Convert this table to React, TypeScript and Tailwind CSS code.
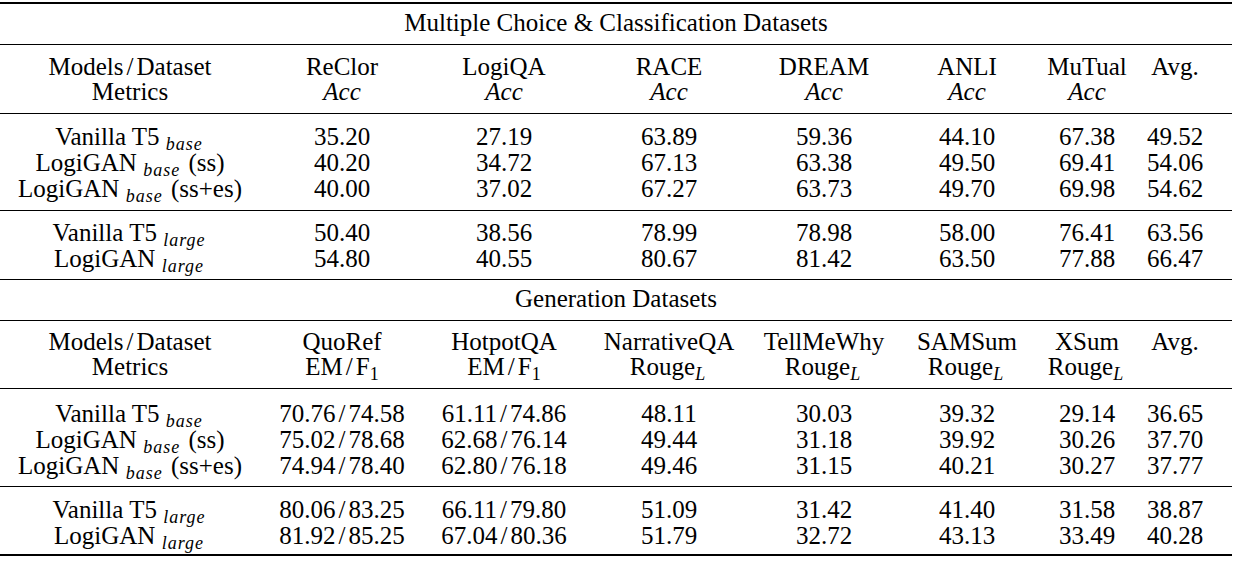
import type { ReactNode } from "react";

// column widths picked so each column centre matches the table
const grid =
  "grid grid-cols-[260px_164px_160px_170px_140px_146px_94px_82px] text-center";

function Sub({ children, italic = true }: { children: ReactNode; italic?: boolean }) {
  return (
    <span
      className={`relative top-[5px] text-[18px] leading-none ${
        italic ? "italic tracking-[1px] pr-[2px]" : ""
      }`}
    >
      {children}
    </span>
  );
}

function Slash() {
  return <span className="mx-[3px]">/</span>;
}

function Row({ cells, className = "" }: { cells: ReactNode[]; className?: string }) {
  return (
    <div className={`${grid} ${className}`}>
      {cells.map((c, i) => (
        <div key={i} className="whitespace-nowrap">
          {c}
        </div>
      ))}
    </div>
  );
}

const acc = <span className="italic">Acc</span>;
const rouge = (
  <>
    Rouge<Sub>L</Sub>
  </>
);
const emf = (
  <>
    EM
    <Slash />F<Sub italic={false}>1</Sub>
  </>
);

const modelsHeader = (
  <>
    Models
    <Slash />
    Dataset
  </>
);

const vanillaBase = (
  <>
    Vanilla T5 <Sub>base</Sub>
  </>
);
const logiSs = (
  <>
    LogiGAN <Sub>base</Sub> (ss)
  </>
);
const logiSsEs = (
  <>
    LogiGAN <Sub>base</Sub> (ss+es)
  </>
);
const vanillaLarge = (
  <>
    Vanilla T5 <Sub>large</Sub>
  </>
);
const logiLarge = (
  <>
    LogiGAN <Sub>large</Sub>
  </>
);

function pair(a: string, b: string) {
  return (
    <>
      {a}
      <Slash />
      {b}
    </>
  );
}

export default function App() {
  return (
    <div className="min-h-screen bg-white text-black">
      <div className="w-[1232px] font-[family-name:Liberation_Serif,Times_New_Roman,serif] text-[25px]">
        <div className="mt-[2px] border-t-2 border-black" />

        {/* part 1 */}
        <div className="pt-[6px] pb-[8px] border-b border-black text-center leading-[26px]">
          Multiple Choice &amp; Classification Datasets
        </div>
        <div className="pt-[9px] pb-[9px] border-b border-black leading-[25px]">
          <Row cells={[modelsHeader, "ReClor", "LogiQA", "RACE", "DREAM", "ANLI", "MuTual", "Avg."]} />
          <Row cells={["Metrics", acc, acc, acc, acc, acc, acc, ""]} />
        </div>
        <div className="pt-[10px] pb-[8px] border-b border-black leading-[26px]">
          <Row cells={[vanillaBase, "35.20", "27.19", "63.89", "59.36", "44.10", "67.38", "49.52"]} />
          <Row cells={[logiSs, "40.20", "34.72", "67.13", "63.38", "49.50", "69.41", "54.06"]} />
          <Row cells={[logiSsEs, "40.00", "37.02", "67.27", "63.73", "49.70", "69.98", "54.62"]} />
        </div>
        <div className="pt-[9px] pb-[7px] border-b border-black leading-[26px]">
          <Row cells={[vanillaLarge, "50.40", "38.56", "78.99", "78.98", "58.00", "76.41", "63.56"]} />
          <Row cells={[logiLarge, "54.80", "40.55", "80.67", "81.42", "63.50", "77.88", "66.47"]} />
        </div>

        {/* part 2 */}
        <div className="pt-[6px] pb-[8px] border-b border-black text-center leading-[26px]">
          Generation Datasets
        </div>
        <div className="pt-[8px] pb-[9px] border-b border-black leading-[25px]">
          <Row cells={[modelsHeader, "QuoRef", "HotpotQA", "NarrativeQA", "TellMeWhy", "SAMSum", "XSum", "Avg."]} />
          <Row cells={["Metrics", emf, emf, rouge, rouge, rouge, rouge, ""]} />
        </div>
        <div className="pt-[12px] pb-[7px] border-b border-black leading-[26px]">
          <Row cells={[vanillaBase, pair("70.76", "74.58"), pair("61.11", "74.86"), "48.11", "30.03", "39.32", "29.14", "36.65"]} />
          <Row cells={[logiSs, pair("75.02", "78.68"), pair("62.68", "76.14"), "49.44", "31.18", "39.92", "30.26", "37.70"]} />
          <Row cells={[logiSsEs, pair("74.94", "78.40"), pair("62.80", "76.18"), "49.46", "31.15", "40.21", "30.27", "37.77"]} />
        </div>
        <div className="pt-[10px] pb-[5px] border-b-2 border-black leading-[26px]">
          <Row cells={[vanillaLarge, pair("80.06", "83.25"), pair("66.11", "79.80"), "51.09", "31.42", "41.40", "31.58", "38.87"]} />
          <Row cells={[logiLarge, pair("81.92", "85.25"), pair("67.04", "80.36"), "51.79", "32.72", "43.13", "33.49", "40.28"]} />
        </div>
      </div>
    </div>
  );
}
